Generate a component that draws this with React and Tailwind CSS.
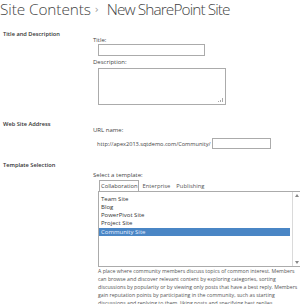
export default function App() {
  const font = { fontFamily: '"Open Sans", "Noto Sans", sans-serif' };
  const lines = [
    "A place where community members discuss topics of common interest. Members",
    "can browse and discover relevant content by exploring categories, sorting",
    "discussions by popularity or by viewing only posts that have a best reply. Members",
    "gain reputation points by participating in the community, such as starting",
    "discussions and replying to them, liking posts and specifying best replies.",
  ];
  return (
    <div className="w-[300px] h-[304px] overflow-hidden bg-white relative text-[#444]" style={font}>
      <div className="h-[20px] whitespace-nowrap text-[15.4px] leading-[16px] font-light text-[#444] tracking-[-0.1px] flex items-center">
        <span>Site Contents</span>
        <span className="text-[#999] text-[10px] leading-[10px] ml-[4px] mr-[8px] font-normal" style={{ fontFamily: '"DejaVu Sans", sans-serif' }}>›</span>
        <span className="tracking-[-0.9px]">New SharePoint Site</span>
      </div>

      {/* Section 1 */}
      <div className="flex mt-[10px]">
        <div className="w-[93px] pl-[3px] text-[5.7px] leading-[8px] font-semibold text-[#333]">Title and Description</div>
        <div className="flex flex-col pt-[6px]">
          <div className="text-[6px] leading-[8px] text-[#444]">Title:</div>
          <div className="ml-[5px] w-[107px] h-[12px] border border-[#ababab] bg-white"></div>
          <div className="mt-[2px] text-[6px] leading-[8px] text-[#444]">Description:</div>
          <div className="relative mt-[2px] ml-[5px] w-[128px] h-[37px] border border-[#ababab] bg-white">
            <svg className="absolute right-[1px] bottom-[1px]" width="6" height="6" viewBox="0 0 6 6">
              <rect x="4" y="1" width="1" height="4" fill="#aaa" />
              <rect x="2" y="3" width="1" height="2" fill="#aaa" />
              <rect x="0" y="4" width="1" height="1" fill="#aaa" />
            </svg>
          </div>
        </div>
      </div>

      {/* Section 2 */}
      <div className="flex mt-[15px]">
        <div className="w-[93px] pl-[3px] text-[5.7px] leading-[8px] font-semibold text-[#333]">Web Site Address</div>
        <div className="flex flex-col pt-[6px]">
          <div className="text-[6px] leading-[8px] text-[#444]">URL name:</div>
          <div className="mt-[4px] ml-[4px] flex items-center">
            <span className="text-[5.6px] leading-[8px] text-[#444] whitespace-nowrap w-[115px]">http://apex2013.sqtdemo.com/Community/</span>
            <div className="w-[59px] h-[11px] border border-[#ababab] bg-white"></div>
          </div>
        </div>
      </div>

      {/* Section 3 */}
      <div className="flex mt-[12px]">
        <div className="w-[93px] pl-[3px] text-[5.7px] leading-[8px] font-semibold text-[#333] shrink-0">Template Selection</div>
        <div className="flex flex-col pt-[10px] w-[207px]">
          <div className="text-[6px] leading-[8px] text-[#444]">Select a template:</div>
          <div className="mt-[1px] ml-[6px] flex items-end h-[11px] text-[5.8px] leading-[8px]">
            <div className="h-[11px] px-[1px] border border-b-0 border-[#ababab] bg-white text-[#444] flex items-center">Collaboration</div>
            <div className="px-[3px] text-[#555] flex items-center h-[10px]">Enterprise</div>
            <div className="px-[3px] text-[#555] flex items-center h-[10px]">Publishing</div>
          </div>
          <div className="ml-[5px] w-[210px] h-[76px] border border-[#ababab] bg-white flex">
            <div className="w-[193px] pt-[3px] text-[6px] leading-[8px] text-[#333]">
              <div className="pl-[2px] h-[8px]">Team Site</div>
              <div className="pl-[2px] h-[8px]">Blog</div>
              <div className="pl-[2px] h-[8px]">PowerPivot Site</div>
              <div className="pl-[2px] h-[8px]">Project Site</div>
              <div className="pl-[2px] h-[8px] mt-[1px] mr-[2px] bg-[#4a86c5] text-[#e6efff]">Community Site</div>
            </div>
            <div className="w-[8px] border-l border-[#dadada] flex flex-col justify-between items-center py-[2px]">
              <svg width="4" height="3" viewBox="0 0 4 3"><path d="M2 0 L4 3 L0 3 Z" fill="#888" /></svg>
              <svg width="4" height="3" viewBox="0 0 4 3"><path d="M0 0 L4 0 L2 3 Z" fill="#888" /></svg>
            </div>
          </div>
          <div className="ml-[5px] w-[202px] text-[5.2px] leading-[8px] text-[#555] whitespace-nowrap">
            {lines.map((l, i) => (
              <div key={i}>{l}</div>
            ))}
          </div>
        </div>
      </div>
    </div>
  );
}
